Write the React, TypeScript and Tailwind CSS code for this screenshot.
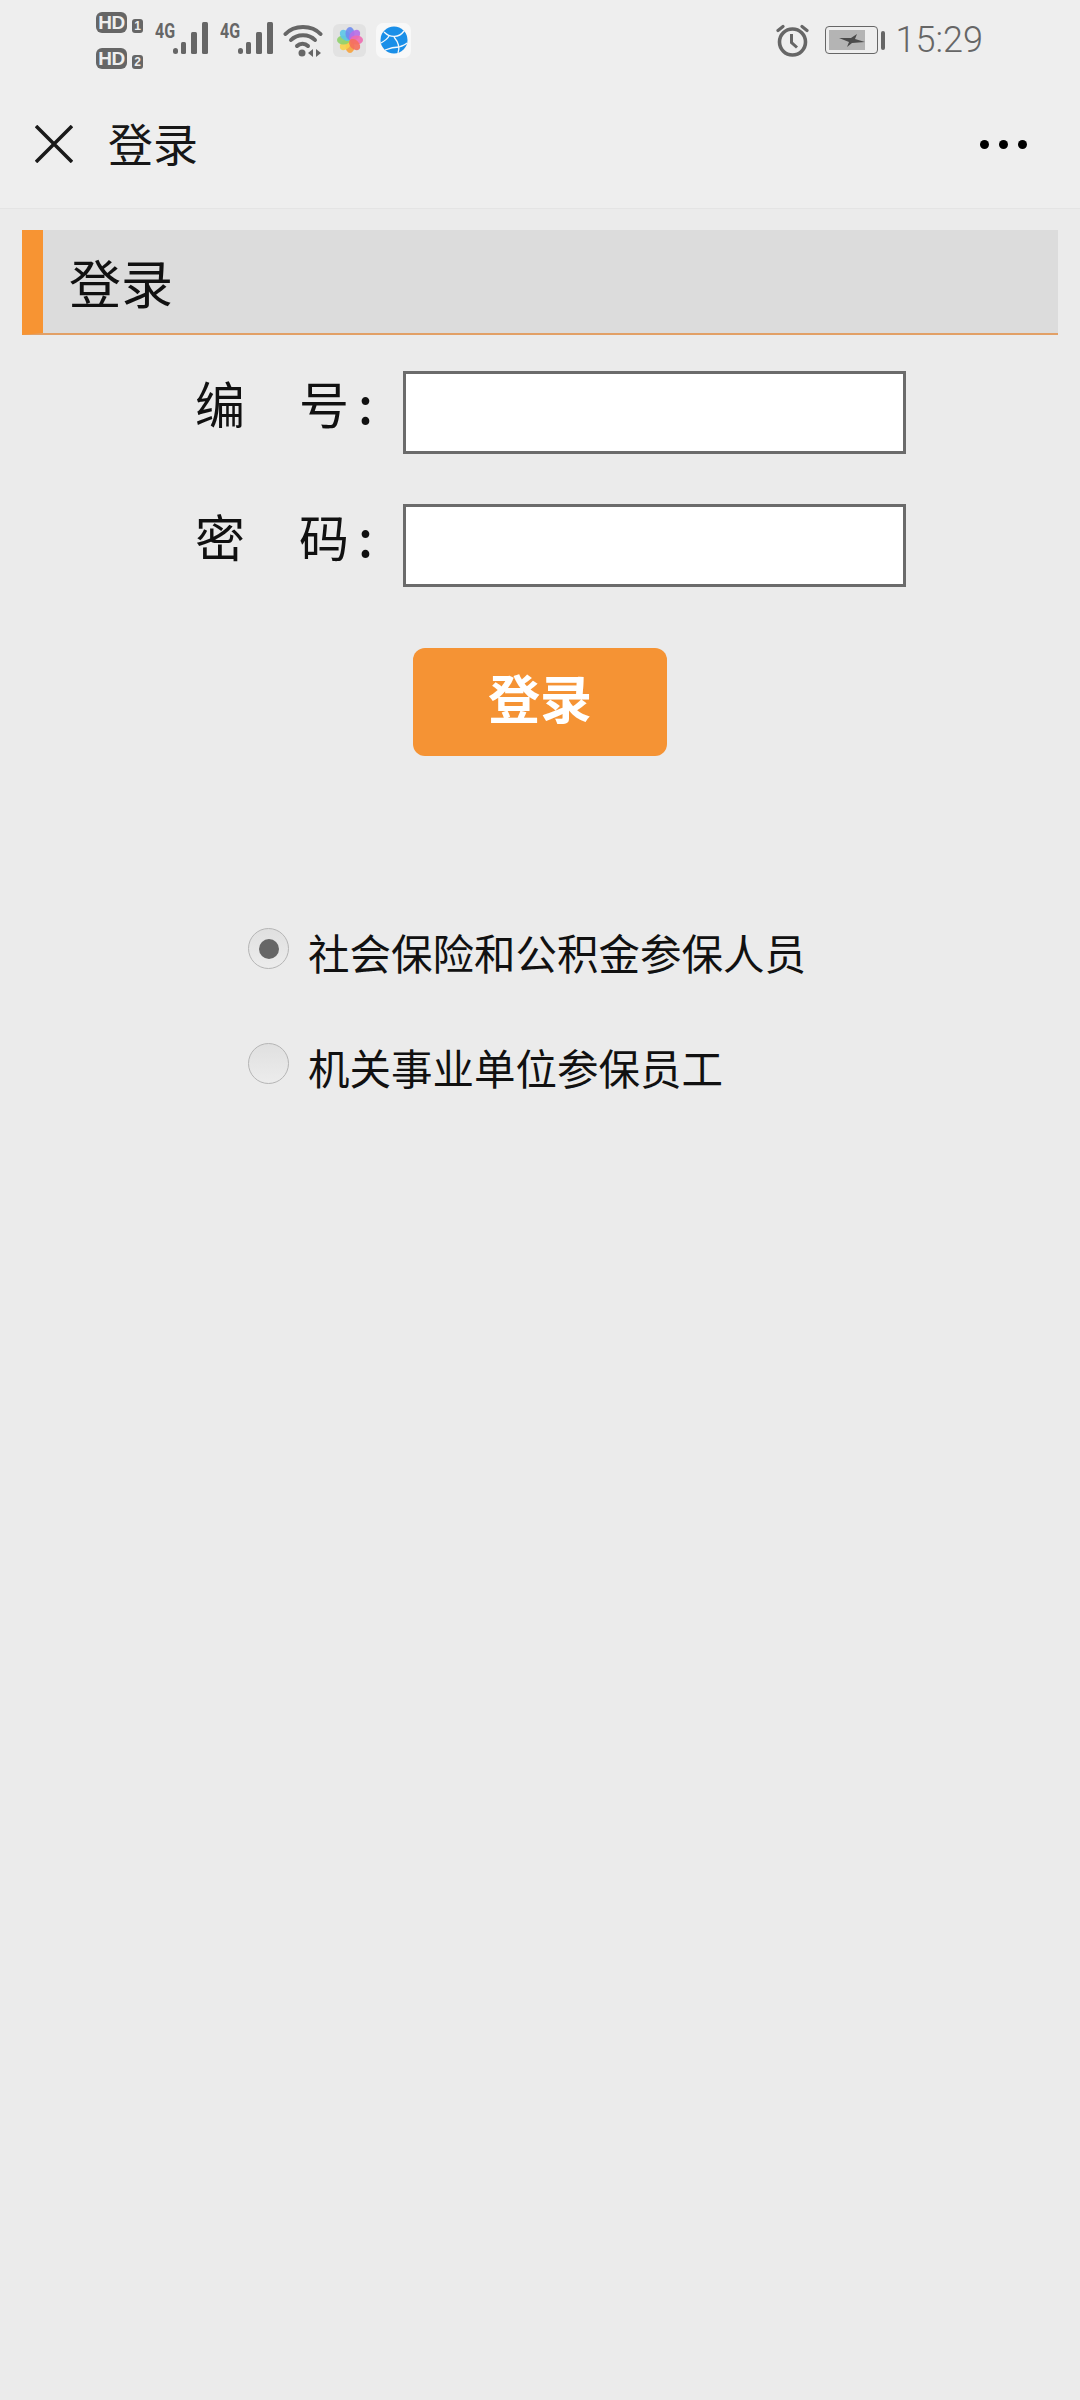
const cjk = "font-['Noto_Sans_CJK_SC','Liberation_Sans',sans-serif]";

function HdBadge({ n }: { n: string }) {
  return (
    <div className="flex items-end gap-[5px]">
      <span className="flex h-[21px] w-[31px] items-center justify-center rounded-[6px] bg-[#666] font-['Liberation_Sans',sans-serif] text-[19px] leading-none font-bold tracking-[-0.5px] text-[#eee]">
        HD
      </span>
      <span className="flex h-[14px] w-[11px] items-center justify-center rounded-[3px] bg-[#666] font-['Liberation_Sans',sans-serif] text-[12px] leading-none font-bold text-[#eee]">
        {n}
      </span>
    </div>
  );
}

function Signal() {
  return (
    <div className="relative h-[32px] w-[53px]">
      <span className="absolute top-[-1px] left-0 origin-left font-['Roboto',sans-serif] text-[20px] leading-none font-bold text-[#666] [transform:scaleX(0.8)]">
        4G
      </span>
      <svg width="53" height="32" viewBox="0 0 53 32" className="absolute inset-0">
        <g fill="#666">
          <rect x="18" y="26" width="5" height="6" rx="2.5" />
          <rect x="26" y="20" width="5" height="12" rx="1.5" />
          <rect x="36" y="10" width="6" height="22" rx="1.5" />
          <rect x="47" y="0" width="6" height="32" rx="1.5" />
        </g>
      </svg>
    </div>
  );
}

function Wifi() {
  return (
    <svg width="40" height="33" viewBox="0 0 40 33" fill="none">
      <g stroke="#666" strokeWidth="4" strokeLinecap="round">
        <path d="M2.500 10 C11 0.500 29 0.500 37.500 10" />
        <path d="M8 16 C14 9.500 26 9.500 32 16" />
        <path d="M14 22 C17 19 22 19 25 22" />
      </g>
      <circle cx="19" cy="29" r="3.500" fill="#666" />
      <path d="M25 29 L30 25 V33 Z M33 25 V33 L38 29 Z" fill="#666" />
    </svg>
  );
}

function GalleryIcon() {
  const colors = ["#f7a33c", "#f9d34a", "#8fd16b", "#5cc6e8", "#6f8cf0", "#b76ee8", "#f06cb0", "#f5705c"];
  return (
    <div className="flex h-[33px] w-[33px] items-center justify-center rounded-[6px] bg-[#e2e2e2]">
      <svg width="26" height="26" viewBox="0 0 26 26">
        {colors.map((c, i) => (
          <ellipse key={c} cx="13" cy="6.500" rx="4.500" ry="6.500" fill={c} opacity="0.9" transform={`rotate(${i * 45 + 180} 13 13)`} />
        ))}
      </svg>
    </div>
  );
}

function GlobeIcon() {
  return (
    <div className="flex h-[35px] w-[35px] items-center justify-center rounded-[7px] bg-[#f8f8f8]">
      <svg width="28" height="28" viewBox="0 0 28 28" fill="none">
        <circle cx="14" cy="14" r="13.500" fill="#1a8fe8" />
        <g stroke="#f4f8fc" strokeWidth="1.300">
          <path d="M4 6 C10 12 19 12 24 5" />
          <path d="M1 17 C6 14 8 12 9 10" />
          <path d="M14 11 C19 17 20 22 18 27" />
          <path d="M5 24 C10 22 15 21 19 21 C22 20 25 19 27 17" />
        </g>
      </svg>
    </div>
  );
}

function AlarmIcon() {
  return (
    <svg width="33" height="33" viewBox="0 0 33 33" fill="none">
      <circle cx="16.500" cy="18" r="13" stroke="#666" strokeWidth="3.600" />
      <path d="M15.500 10 V18.500 L21 23.500" stroke="#666" strokeWidth="3" />
      <path d="M2 6.500 L7 2.500 M31 6.500 L26 2.500" stroke="#666" strokeWidth="3.200" strokeLinecap="round" />
    </svg>
  );
}

function BatteryIcon() {
  return (
    <div className="flex items-center gap-[3px]">
      <div className="flex h-[28px] w-[53px] items-center rounded-[4px] border-[1.5px] border-[#666] p-[3px]">
        <div className="flex h-full w-[36px] items-center justify-end bg-[#b4b4b4]">
          <svg width="26" height="13" viewBox="0 0 26 13">
            <path d="M0 4 L12 4 L18 0 L16 5 L26 8 L13 9 L8 13 L10 8 Z" fill="#4a4a4a" />
          </svg>
        </div>
      </div>
      <div className="h-[19px] w-[4px] rounded-[2px] bg-[#666]" />
    </div>
  );
}

function StatusBar() {
  return (
    <div className="flex h-[80px] items-center pr-[97px] pl-[96px]">
      <div className="flex flex-col gap-[15px]">
        <HdBadge n="1" />
        <HdBadge n="2" />
      </div>
      <div className="mb-[4px] ml-[12px] flex items-center gap-[12px]">
        <Signal />
        <Signal />
      </div>
      <div className="ml-[10px] flex items-center">
        <Wifi />
        <div className="ml-[10px]">
          <GalleryIcon />
        </div>
        <div className="ml-[10px]">
          <GlobeIcon />
        </div>
      </div>
      <div className="ml-auto flex items-center">
        <AlarmIcon />
        <div className="ml-[16px]">
          <BatteryIcon />
        </div>
        <span className="ml-[11px] font-['Roboto',sans-serif] text-[36px] leading-none font-light text-[#666]">15:29</span>
      </div>
    </div>
  );
}

function NavBar() {
  return (
    <div className="flex h-[129px] items-center border-b border-[#e4e4e4] pr-[53px] pl-[35px]">
      <svg width="38" height="38" viewBox="0 0 38 38" fill="none">
        <path d="M1 1 L37 37 M37 1 L1 37" stroke="#1a1a1a" strokeWidth="3.500" />
      </svg>
      <span className={`mb-[3px] ml-[35px] text-[45px] leading-none text-[#171717] ${cjk}`}>登录</span>
      <div className="ml-auto flex items-center gap-[10px]">
        <span className="h-[9px] w-[9px] rounded-full bg-black" />
        <span className="h-[9px] w-[9px] rounded-full bg-black" />
        <span className="h-[9px] w-[9px] rounded-full bg-black" />
      </div>
    </div>
  );
}

function Field({ label }: { label: [string, string] }) {
  return (
    <div className="flex h-[83px] items-center">
      <label className={`mb-[21px] flex w-[372px] justify-end text-[50px] leading-none text-[#111] ${cjk}`}>
        <span>{label[0]}</span>
        <span className="ml-[54px]">{label[1]}</span>
        <span className="w-[23px] pl-[9px] font-medium whitespace-nowrap">:</span>
      </label>
      <input type="text" className="ml-[31px] h-[83px] w-[503px] border-[3px] border-[#6b6b6b] bg-white" />
    </div>
  );
}

function Radio({ label, checked }: { label: string; checked?: boolean }) {
  return (
    <div className="flex h-[52px] items-start">
      <span className="flex h-[41px] w-[41px] items-center justify-center rounded-full border border-[#b5b5b5] bg-gradient-to-b from-[#e0e0e0] to-[#ececec]">
        {checked && <span className="h-[20px] w-[20px] rounded-full bg-[#666]" />}
      </span>
      <span className={`mt-[-1px] ml-[19px] text-[41.500px] leading-[50px] text-[#111] ${cjk}`}>{label}</span>
    </div>
  );
}

export default function App() {
  return (
    <div className="min-h-[2400px] w-[1080px] bg-[#ebebeb]">
      <div className="bg-[#eeeeee]">
        <StatusBar />
        <NavBar />
      </div>

      <div className="mx-[22px] mt-[21px] flex h-[105px] items-center border-b-2 border-l-[21px] border-b-[#e2a066] border-l-[#f79433] bg-[#dcdcdc]">
        <span className={`ml-[26px] text-[52px] leading-none text-[#111] ${cjk}`}>登录</span>
      </div>

      <div className="mt-[36px] flex flex-col gap-[50px]">
        <Field label={["编", "号"]} />
        <Field label={["密", "码"]} />
      </div>

      <div className="mt-[61px] flex justify-center">
        <button className={`h-[108px] w-[254px] rounded-[12px] bg-[#f59334] pb-[10px] text-[52px] leading-none font-bold text-white ${cjk}`}>
          登录
        </button>
      </div>

      <div className="mt-[172px] ml-[248px] flex flex-col gap-[63px]">
        <Radio label="社会保险和公积金参保人员" checked />
        <Radio label="机关事业单位参保员工" />
      </div>
    </div>
  );
}
